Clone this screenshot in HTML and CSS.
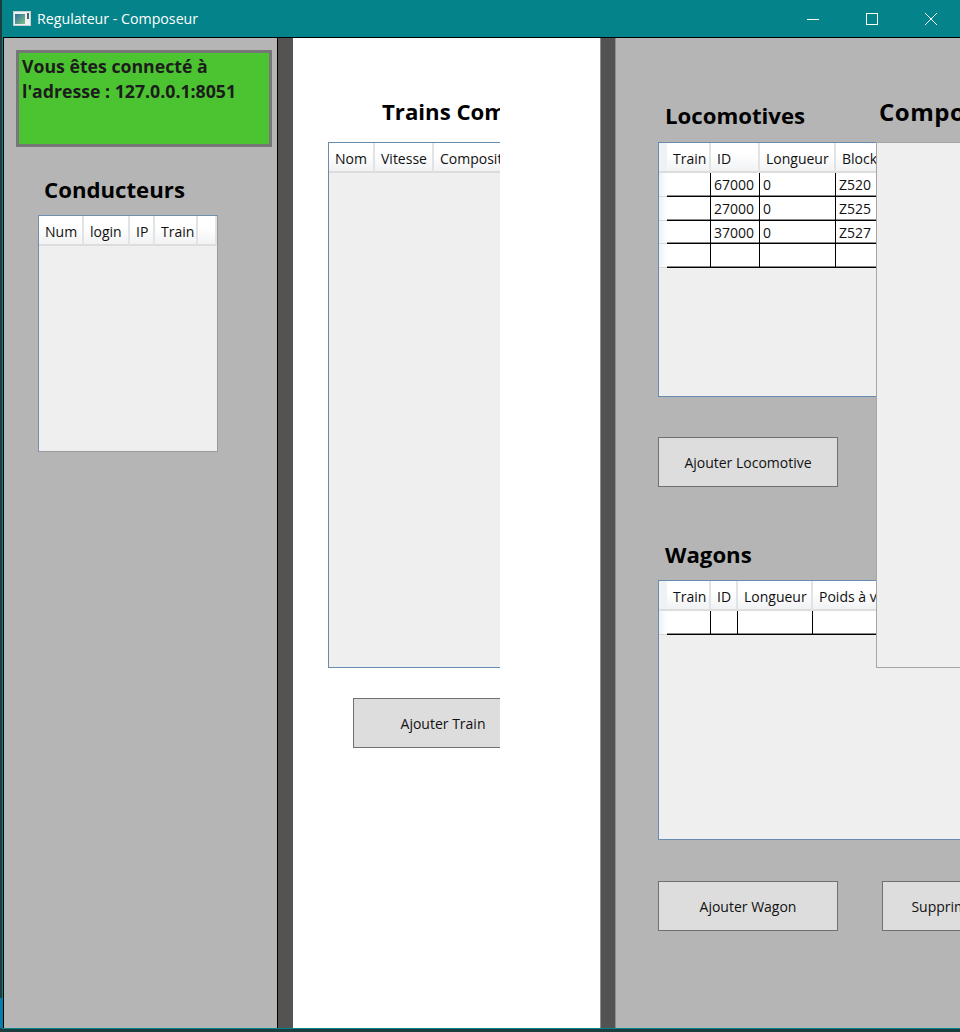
FILE: index.html
```html
<!DOCTYPE html>
<html lang="fr">
<head>
    <meta charset="UTF-8">
    <title>Regulateur - Composeur</title>
    <link rel="stylesheet" href="styles.css">
</head>
<body>
    <div class="window">
        <header class="titlebar">
            <svg class="app-icon" width="18" height="16" viewBox="0 0 18 16">
                <defs>
                    <linearGradient id="iconFill" x1="0" y1="0" x2="1" y2="1">
                        <stop offset="0" stop-color="#2f6f9a"/>
                        <stop offset="1" stop-color="#7fc08a"/>
                    </linearGradient>
                </defs>
                <rect x="0.5" y="0.5" width="17" height="14" fill="#eef2f2" stroke="#c4cfcf"/>
                <rect x="2" y="3" width="10" height="10" fill="url(#iconFill)"/>
                <rect x="14" y="2" width="2" height="6" fill="#4f6266"/>
            </svg>
            <span class="title">Regulateur - Composeur</span>
            <div class="controls">
                <button class="control">
                    <svg width="14" height="14" viewBox="0 0 14 14"><path d="M1 7.5h12" stroke="#fff" fill="none"/></svg>
                </button>
                <button class="control">
                    <svg width="14" height="14" viewBox="0 0 14 14"><rect x="1.5" y="1.5" width="11" height="11" stroke="#fff" fill="none"/></svg>
                </button>
                <button class="control">
                    <svg width="14" height="14" viewBox="0 0 14 14"><path d="M1 1l12 12M13 1L1 13" stroke="#fff" fill="none"/></svg>
                </button>
            </div>
        </header>

        <main class="content">
            <section class="panel-drivers">
                <div class="status">Vous êtes connecté à l'adresse : 127.0.0.1:8051</div>
                <h2 class="drivers-title">Conducteurs</h2>
                <div class="grid-box drivers-grid">
                    <table>
                        <thead>
                            <tr>
                                <th class="w-45">Num</th>
                                <th class="w-46">login</th>
                                <th class="w-25">IP</th>
                                <th class="w-43">Train</th>
                                <th class="w-filler"></th>
                            </tr>
                        </thead>
                    </table>
                </div>
            </section>

            <div class="splitter"></div>

            <section class="panel-trains">
                <div class="trains-clip">
                    <h2 class="trains-title">Trains Composés</h2>
                    <div class="grid-box trains-grid">
                        <table>
                            <thead>
                                <tr>
                                    <th class="w-46">Nom</th>
                                    <th class="w-59">Vitesse</th>
                                    <th class="w-100">Composition</th>
                                </tr>
                            </thead>
                        </table>
                    </div>
                    <button class="action trains-add">Ajouter Train</button>
                </div>
            </section>

            <div class="splitter splitter-edge"></div>

            <section class="panel-stock">
                <h2 class="stock-title loco-title">Locomotives</h2>
                <div class="grid-box stock-grid loco-grid">
                    <table>
                        <thead>
                            <tr>
                                <th class="row-head"></th>
                                <th class="w-44">Train</th>
                                <th class="w-49">ID</th>
                                <th class="w-76">Longueur</th>
                                <th class="w-100">Block</th>
                            </tr>
                        </thead>
                        <tbody>
                            <tr><td class="row-head"></td><td></td><td>67000</td><td>0</td><td>Z520</td></tr>
                            <tr><td class="row-head"></td><td></td><td>27000</td><td>0</td><td>Z525</td></tr>
                            <tr><td class="row-head"></td><td></td><td>37000</td><td>0</td><td>Z527</td></tr>
                            <tr><td class="row-head"></td><td></td><td></td><td></td><td></td></tr>
                        </tbody>
                    </table>
                </div>
                <button class="action loco-add">Ajouter Locomotive</button>

                <h2 class="stock-title wagon-title">Wagons</h2>
                <div class="grid-box stock-grid wagon-grid">
                    <table>
                        <thead>
                            <tr>
                                <th class="row-head"></th>
                                <th class="w-44">Train</th>
                                <th class="w-27">ID</th>
                                <th class="w-75">Longueur</th>
                                <th class="w-130">Poids à vide</th>
                            </tr>
                        </thead>
                        <tbody>
                            <tr><td class="row-head"></td><td></td><td></td><td></td><td></td></tr>
                        </tbody>
                    </table>
                </div>
                <div class="wagon-actions">
                    <button class="action">Ajouter Wagon</button>
                    <button class="action action-small">Supprimer</button>
                </div>

                <h2 class="compo-title">Composition</h2>
                <div class="compo-grid"></div>
            </section>
        </main>
    </div>
</body>
</html>
```
FILE: styles.css
```css
* {
    box-sizing: border-box;
}

html, body {
    margin: 0;
    height: 100%;
}

body {
    background: linear-gradient(#1c3d3d 998px, #0b7bb5 998px, #0b7bb5 1028px, #1c3d3d 1028px);
    font-family: "Open Sans", "Noto Sans", sans-serif;
    font-size: 14px;
    color: #111;
    overflow: hidden;
}

.window {
    display: flex;
    flex-direction: column;
    width: 958px;
    height: 1029px;
    margin-left: 2px;
    border-left: 1px solid #05838a;
    border-bottom: 1px solid #05838a;
    overflow: hidden;
}

/* title bar */
.titlebar {
    display: flex;
    align-items: center;
    flex: none;
    height: 37px;
    padding-left: 10px;
    background: #05838a;
    color: #fff;
}

.app-icon {
    flex: none;
    margin-right: 6px;
}

.title {
    font-size: 14.2px;
}

.controls {
    display: flex;
    margin-left: auto;
}

.control {
    display: flex;
    align-items: center;
    justify-content: center;
    width: 59px;
    height: 37px;
    padding: 0;
    border: 0;
    background: none;
}

/* panels */
.content {
    display: flex;
    flex: 1;
    min-height: 0;
    border-top: 1px solid #000;
    border-left: 1px solid #000;
    background: #b5b5b5;
}

.panel-drivers {
    flex: none;
    width: 274px;
    padding: 12px 0 0 12px;
    border-right: 1px solid #000;
}

.splitter {
    flex: none;
    width: 15px;
    background: #555252;
}

.splitter-edge {
    width: 16px;
    border-left: 1px solid #8e8e8e;
    border-right: 1px solid #8e8e8e;
}

.panel-trains {
    flex: none;
    width: 307px;
    background: #fff;
}

.trains-clip {
    width: 207px;
    height: 100%;
    overflow: hidden;
}

.panel-stock {
    position: relative;
    flex: 1;
    min-width: 0;
    overflow: hidden;
}

/* connection status */
.status {
    width: 256px;
    height: 97px;
    padding: 1px 3px;
    border: 3px solid #777;
    background: #4cc431;
    color: #1c1c1c;
    font-size: 17.7px;
    font-weight: 700;
    line-height: 25px;
}

h2 {
    margin: 0;
    color: #000;
    font-size: 22.2px;
    font-weight: 700;
    line-height: 30px;
    white-space: nowrap;
}

.drivers-title {
    margin: 28px 0 0 28px;
}

.trains-title {
    margin: 59px 0 0 89px;
}

.stock-title {
    margin-left: 49px;
}

.loco-title {
    margin-top: 63px;
}

.wagon-title {
    margin-top: 53px;
}

.compo-title {
    position: absolute;
    top: 59px;
    left: 263px;
    font-size: 24px;
    letter-spacing: 0.5px;
}

/* data grids */
.grid-box {
    border: 1px solid #688caf;
    background: #efefef;
    overflow: hidden;
}

.drivers-grid {
    width: 180px;
    height: 237px;
    margin: 10px 0 0 22px;
    border-color: #6f8fb0 #9a9a9a #9a9a9a #6f8fb0;
}

.trains-grid {
    width: 240px;
    height: 526px;
    margin: 15px 0 0 35px;
}

.stock-grid {
    width: 340px;
    margin-left: 42px;
}

.loco-grid {
    height: 255px;
    margin-top: 11px;
}

.wagon-grid {
    height: 260px;
    margin-top: 10px;
}

.compo-grid {
    position: absolute;
    top: 104px;
    left: 260px;
    width: 100px;
    height: 526px;
    border: 1px solid #a6a6a6;
    background: #efefef;
}

table {
    border-collapse: separate;
    border-spacing: 0;
    table-layout: fixed;
}

th {
    height: 30px;
    padding: 2px 0 0 6px;
    border-right: 2px solid #e2e3e5;
    border-bottom: 2px solid #dcdcdc;
    background: linear-gradient(#fff 40%, #f1f2f4);
    font-weight: 400;
    text-align: left;
    white-space: nowrap;
    overflow: hidden;
}

td {
    height: 23.75px;
    padding: 1px 0 0 3px;
    border-right: 1px solid #000;
    border-bottom: 1px solid #000;
    background: #fff;
    box-shadow: inset 0 -1px #8a8a8a;
    white-space: nowrap;
}

th.row-head {
    width: 8px;
    padding: 0;
    border-right: 0;
    background: #f0f1f2;
}

td.row-head {
    width: 8px;
    padding: 0;
    border-right: 0;
    border-bottom: 1px solid #d8d8d8;
    background: linear-gradient(90deg, #eef1f4, #fff);
    box-shadow: none;
}

.w-25 { width: 25px; }
.w-27 { width: 27px; }
.w-43 { width: 43px; }
.w-44 { width: 44px; }
.w-45 { width: 45px; }
.w-46 { width: 46px; }
.w-49 { width: 49px; }
.w-59 { width: 59px; }
.w-75 { width: 75px; }
.w-76 { width: 76px; }
.w-100 { width: 100px; }
.w-130 { width: 130px; }
.w-filler { width: 19px; }

/* buttons */
.action {
    display: block;
    flex: none;
    width: 180px;
    height: 50px;
    padding: 0;
    border: 1px solid #707070;
    background: #dddddd;
    color: #111;
    font: inherit;
}

.action-small {
    width: 128px;
}

.trains-add {
    margin: 30px 0 0 60px;
}

.loco-add {
    margin: 40px 0 0 42px;
}

.wagon-actions {
    display: flex;
    gap: 44px;
    margin: 41px 0 0 42px;
}
```
